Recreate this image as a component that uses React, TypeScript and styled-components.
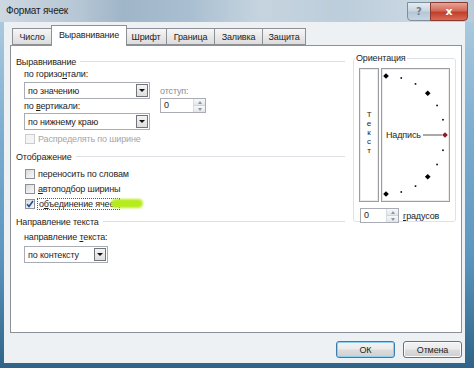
import React from 'react'
import styled, { createGlobalStyle } from 'styled-components'

const GlobalStyle = createGlobalStyle`
  html, body { margin: 0; padding: 0; background: #6d9fc4; }
  body { font-family: "Liberation Sans", Arial, sans-serif; }
`

const Window = styled.div`
  width: 474px;
  height: 368px;
  display: flex;
  flex-direction: column;
  overflow: hidden;
  background: linear-gradient(180deg, #b4cfe2 0%, #7eaed0 35%, #5b95bf 70%, #2f6488 100%);
`

const TitleBar = styled.div`
  height: 22px;
  display: flex;
  align-items: flex-start;
  background: linear-gradient(90deg, #cdd8e1 0%, #b7c7d5 16%, #9fb5c8 26%, #a9bfd1 40%, #c6d4df 55%, #bccddb 72%, #c9d7e2 88%, #b9cbda 100%);
`

const Title = styled.div`
  flex: 1;
  padding: 5px 0 0 6px;
  font-size: 10px;
  letter-spacing: -0.2px;
  color: #1c1c1c;
`

const CaptionButtons = styled.div`
  display: flex;
  margin: 2px 6px 0 0;
`

const CaptionButton = styled.div<{ close?: boolean }>`
  width: ${({ close }) => (close ? 36 : 22)}px;
  height: 17px;
  display: flex;
  align-items: center;
  justify-content: center;
  border: 1px solid ${({ close }) => (close ? '#8a3a30' : '#7d8e9c')};
  border-radius: ${({ close }) => (close ? '0 0 4px 0' : '0 0 0 4px')};
  margin-left: ${({ close }) => (close ? '-1px' : '0')};
  background: ${({ close }) =>
    close
      ? 'linear-gradient(180deg, #e6a497 0%, #d26a58 45%, #c0402c 55%, #d96b55 100%)'
      : 'linear-gradient(180deg, #e4ecf2 0%, #c9d6e1 45%, #b5c6d4 55%, #c8d6e2 100%)'};
  color: ${({ close }) => (close ? '#ffffff' : '#6f7f8c')};
  font-weight: bold;
  font-size: ${({ close }) => (close ? 11 : 10)}px;
  font-family: "DejaVu Sans", sans-serif;
`

const Frame = styled.div`
  flex: 1;
  display: flex;
  padding: 0 9px 5px 4px;
`

const Client = styled.div`
  flex: 1;
  display: flex;
  flex-direction: column;
  padding: 3px 3px 0 6px;
  background: #eef1f4;
  font-size: 9px;
  letter-spacing: -0.15px;
  color: #1e1e1e;
`

const TabRow = styled.div`
  height: 20px;
  display: flex;
  align-items: flex-end;
  padding-left: 2px;
  position: relative;
  z-index: 1;
`

const Tab = styled.div<{ active?: boolean; w: number }>`
  width: ${({ w }) => w}px;
  height: ${({ active }) => (active ? 21 : 17)}px;
  margin-bottom: ${({ active }) => (active ? -1 : 0)}px;
  margin-left: ${({ active }) => (active ? -1 : 0)}px;
  margin-right: ${({ active }) => (active ? -1 : 0)}px;
  box-sizing: border-box;
  border: 1px solid #8d9096;
  border-bottom: ${({ active }) => (active ? 'none' : '1px solid #8d9096')};
  border-left-width: ${({ active }) => (active ? 1 : 0)}px;
  display: flex;
  align-items: center;
  justify-content: center;
  padding-bottom: ${({ active }) => (active ? 2 : 0)}px;
  background: ${({ active }) => (active ? '#ffffff' : 'linear-gradient(180deg, #f6f6f6 0%, #e9e9e9 50%, #dcdcdc 100%)')};
  z-index: ${({ active }) => (active ? 2 : 1)};
  &:first-child { border-left-width: 1px; }
`

const Panel = styled.div`
  height: 288px;
  box-sizing: border-box;
  border: 1px solid #8d9096;
  background: #ffffff;
  display: flex;
`

const LeftColumn = styled.div`
  width: 334px;
  padding: 8px 0 0 5px;
  box-sizing: border-box;
  display: flex;
  flex-direction: column;
`

const GroupHeader = styled.div<{ top: number }>`
  display: flex;
  align-items: center;
  height: 13px;
  margin-top: ${({ top }) => top}px;
  &::after {
    content: '';
    flex: 1;
    height: 1px;
    background: #dcdfe3;
    margin-left: 4px;
  }
`

const FieldLabel = styled.div<{ top?: number }>`
  height: 13px;
  line-height: 13px;
  margin: ${({ top }) => top || 0}px 0 0 8px;
`

const ComboBox = styled.div<{ w: number; top?: number }>`
  width: ${({ w }) => w}px;
  height: 17px;
  margin: ${({ top }) => top || 0}px 0 0 8px;
  box-sizing: border-box;
  border: 1px solid #a9acb3;
  background: #fff;
  display: flex;
  align-items: center;
`

const ComboText = styled.span`
  flex: 1;
  padding-left: 3px;
`

const DropButton = styled.div`
  width: 12px;
  height: 13px;
  margin-right: 1px;
  box-sizing: border-box;
  border: 1px solid #70757c;
  background: linear-gradient(180deg, #f4f4f4 0%, #dedede 100%);
  display: flex;
  align-items: center;
  justify-content: center;
  &::after {
    content: '';
    border-left: 3px solid transparent;
    border-right: 3px solid transparent;
    border-top: 3px solid #111;
  }
`

const AlignRow = styled.div`
  display: flex;
`

const AlignStack = styled.div`
  display: flex;
  flex-direction: column;
`

const IndentBlock = styled.div`
  display: flex;
  flex-direction: column;
  margin: 17px 0 0 10px;
  color: #8a8f96;
`

const IndentLabel = styled.span`
  line-height: 13px;
`

const SpinBox = styled.div<{ w: number }>`
  width: ${({ w }) => w}px;
  height: 15px;
  box-sizing: border-box;
  border: 1px solid #a9acb3;
  background: #fff;
  display: flex;
  align-items: stretch;
  color: #1e1e1e;
`

const SpinText = styled.span`
  flex: 1;
  padding-left: 3px;
  line-height: 13px;
`

const SpinArrows = styled.div`
  width: 11px;
  display: flex;
  flex-direction: column;
  border-left: 1px solid #d8dbe0;
`

const SpinArrow = styled.div<{ up?: boolean }>`
  flex: 1;
  display: flex;
  align-items: center;
  justify-content: center;
  background: linear-gradient(180deg, #f7f8f9 0%, #e3e6ea 100%);
  border-bottom: ${({ up }) => (up ? '1px solid #d0d4d9' : 'none')};
  &::after {
    content: '';
    border-left: 2.5px solid transparent;
    border-right: 2.5px solid transparent;
    ${({ up }) => (up ? 'border-bottom: 3px solid #8a97a6;' : 'border-top: 3px solid #8a97a6;')}
  }
`

const CheckRow = styled.div<{ top?: number; disabled?: boolean; h?: number }>`
  height: ${({ h }) => h || 15}px;
  display: flex;
  align-items: center;
  gap: 3px;
  margin: ${({ top }) => top || 0}px 0 0 9px;
  color: ${({ disabled }) => (disabled ? '#a3a6ab' : '#1e1e1e')};
  position: relative;
`

const CheckBox = styled.div<{ disabled?: boolean }>`
  width: 10px;
  height: 10px;
  box-sizing: border-box;
  border: 1px solid ${({ disabled }) => (disabled ? '#c9ccd0' : '#8e9197')};
  background: ${({ disabled }) =>
    disabled ? '#f4f4f4' : 'linear-gradient(135deg, #d6d8db 0%, #eceef0 60%, #f8f8f8 100%)'};
  display: flex;
  align-items: center;
  justify-content: center;
`

const FocusText = styled.span`
  outline: 1px dotted #555;
  outline-offset: 0;
  padding: 0 1px;
`

const Highlighter = styled.span`
  position: absolute;
  left: 86px;
  top: 3px;
  width: 32px;
  height: 9px;
  border-radius: 5px;
  background: #b7ec1c;
  filter: blur(0.8px);
`

const RightColumn = styled.div`
  padding: 12px 0 0 8px;
`

const OrientationGroup = styled.div`
  position: relative;
  width: 103px;
  height: 164px;
  box-sizing: border-box;
  border: 1px solid #dde3e8;
  border-radius: 3px;
  padding: 9px 0 0 5px;
  display: flex;
  flex-direction: column;
`

const Legend = styled.span`
  position: absolute;
  left: 1px;
  top: -7px;
  padding: 0 1px;
  background: #fff;
  line-height: 13px;
`

const OrientBoxes = styled.div`
  display: flex;
  gap: 2px;
`

const VerticalTextBox = styled.div`
  width: 20px;
  height: 134px;
  box-sizing: border-box;
  border: 1px solid #9a9da2;
  box-shadow: inset 0 0 0 1px #ececec;
  display: flex;
  flex-direction: column;
  align-items: center;
  justify-content: center;
  padding-bottom: 6px;
  font-size: 8px;
  line-height: 9px;
`

const DialBox = styled.div`
  position: relative;
  width: 69px;
  height: 134px;
  box-sizing: border-box;
  border: 1px solid #9a9da2;
  box-shadow: inset 0 0 0 1px #ececec;
`

const DialLabel = styled.span`
  position: absolute;
  left: 4px;
  top: 61px;
  line-height: 11px;
`

const DegreeRow = styled.div`
  display: flex;
  align-items: center;
  gap: 4px;
  margin: 6px 0 0 1px;
`

const ButtonRow = styled.div`
  display: flex;
  justify-content: flex-end;
  gap: 8px;
  margin-top: 8px;
`

const DialogButton = styled.div<{ primary?: boolean }>`
  width: 59px;
  height: 17px;
  box-sizing: border-box;
  border: 1px solid ${({ primary }) => (primary ? '#3d7bad' : '#707070')};
  border-radius: 3px;
  box-shadow: ${({ primary }) => (primary ? 'inset 0 0 0 1px #8fd0f0' : 'inset 0 0 0 1px #fbfbfb')};
  background: linear-gradient(180deg, #f3f3f3 0%, #ebebeb 48%, #dddddd 52%, #cfcfcf 100%);
  display: flex;
  align-items: center;
  justify-content: center;
`

const tabs = [
  { label: 'Число', w: 40 },
  { label: 'Выравнивание', w: 76, active: true },
  { label: 'Шрифт', w: 41 },
  { label: 'Граница', w: 48 },
  { label: 'Заливка', w: 48 },
  { label: 'Защита', w: 43 },
]

const Check = () => (
  <svg width="8" height="8" viewBox="0 0 8 8">
    <path d="M1 4.2 L3 6.4 L7 1" fill="none" stroke="#1f4f9a" strokeWidth="1.6" />
  </svg>
)

const Dial = () => {
  const cx = 4
  const cy = 66
  const r = 59
  const marks = [90, 75, 60, 45, 30, 15, -15, -30, -45, -60, -75, -90]
  return (
    <svg width="67" height="132" style={{ position: 'absolute', left: 0, top: 0 }}>
      {marks.map((a) => {
        const x = cx + r * Math.cos((a * Math.PI) / 180)
        const y = cy - r * Math.sin((a * Math.PI) / 180)
        const big = a % 45 === 0
        return big ? (
          <rect key={a} x={x - 2} y={y - 2} width="4" height="4" fill="#000" transform={`rotate(45 ${x} ${y})`} />
        ) : (
          <rect key={a} x={x - 0.8} y={y - 0.8} width="1.6" height="1.6" fill="#000" />
        )
      })}
      <line x1="41" y1={cy} x2="60" y2={cy} stroke="#555" strokeWidth="1" />
      <rect x={63 - 2} y={cy - 2} width="4" height="4" fill="#8c1c24" transform={`rotate(45 63 ${cy})`} />
    </svg>
  )
}

const App: React.FC = () => {
  return (
    <>
      <GlobalStyle />
      <Window>
        <TitleBar>
          <Title>Формат ячеек</Title>
          <CaptionButtons>
            <CaptionButton>?</CaptionButton>
            <CaptionButton close>x</CaptionButton>
          </CaptionButtons>
        </TitleBar>
        <Frame>
          <Client>
            <TabRow>
              {tabs.map((t) => (
                <Tab key={t.label} w={t.w} active={t.active}>
                  {t.label}
                </Tab>
              ))}
            </TabRow>
            <Panel>
              <LeftColumn>
                <GroupHeader top={1}>Выравнивание</GroupHeader>
                <AlignRow>
                  <AlignStack>
                    <FieldLabel>по горизо<u>н</u>тали:</FieldLabel>
                    <ComboBox w={126} top={1}>
                      <ComboText>по значению</ComboText>
                      <DropButton />
                    </ComboBox>
                    <FieldLabel top={1}>по <u>в</u>ертикали:</FieldLabel>
                    <ComboBox w={126}>
                      <ComboText>по нижнему краю</ComboText>
                      <DropButton />
                    </ComboBox>
                  </AlignStack>
                  <IndentBlock>
                    <IndentLabel>отступ:</IndentLabel>
                    <SpinBox w={46}>
                      <SpinText>0</SpinText>
                      <SpinArrows>
                        <SpinArrow up />
                        <SpinArrow />
                      </SpinArrows>
                    </SpinBox>
                  </IndentBlock>
                </AlignRow>
                <CheckRow top={2} disabled h={14}>
                  <CheckBox disabled />
                  Распределять по ширине
                </CheckRow>
                <GroupHeader top={4}>Отображение</GroupHeader>
                <CheckRow top={3}>
                  <CheckBox />
                  переносить по словам
                </CheckRow>
                <CheckRow>
                  <CheckBox />
                  <span><u>а</u>втоподбор ширины</span>
                </CheckRow>
                <CheckRow>
                  <CheckBox>
                    <Check />
                  </CheckBox>
                  <FocusText>о<u>б</u>ъединение ячеек</FocusText>
                  <Highlighter />
                </CheckRow>
                <GroupHeader top={4}>Направление текста</GroupHeader>
                <FieldLabel top={3}>направление <u>т</u>екста:</FieldLabel>
                <ComboBox w={84} top={2}>
                  <ComboText>по контексту</ComboText>
                  <DropButton />
                </ComboBox>
              </LeftColumn>
              <RightColumn>
                <OrientationGroup>
                  <Legend>Ориентация</Legend>
                  <OrientBoxes>
                    <VerticalTextBox>
                      <span>Т</span>
                      <span>е</span>
                      <span>к</span>
                      <span>с</span>
                      <span>т</span>
                    </VerticalTextBox>
                    <DialBox>
                      <Dial />
                      <DialLabel>Надпись</DialLabel>
                    </DialBox>
                  </OrientBoxes>
                  <DegreeRow>
                    <SpinBox w={39}>
                      <SpinText>0</SpinText>
                      <SpinArrows>
                        <SpinArrow up />
                        <SpinArrow />
                      </SpinArrows>
                    </SpinBox>
                    <span><u>г</u>радусов</span>
                  </DegreeRow>
                </OrientationGroup>
              </RightColumn>
            </Panel>
            <ButtonRow>
              <DialogButton primary>ОК</DialogButton>
              <DialogButton>Отмена</DialogButton>
            </ButtonRow>
          </Client>
        </Frame>
      </Window>
    </>
  )
}

export default App
